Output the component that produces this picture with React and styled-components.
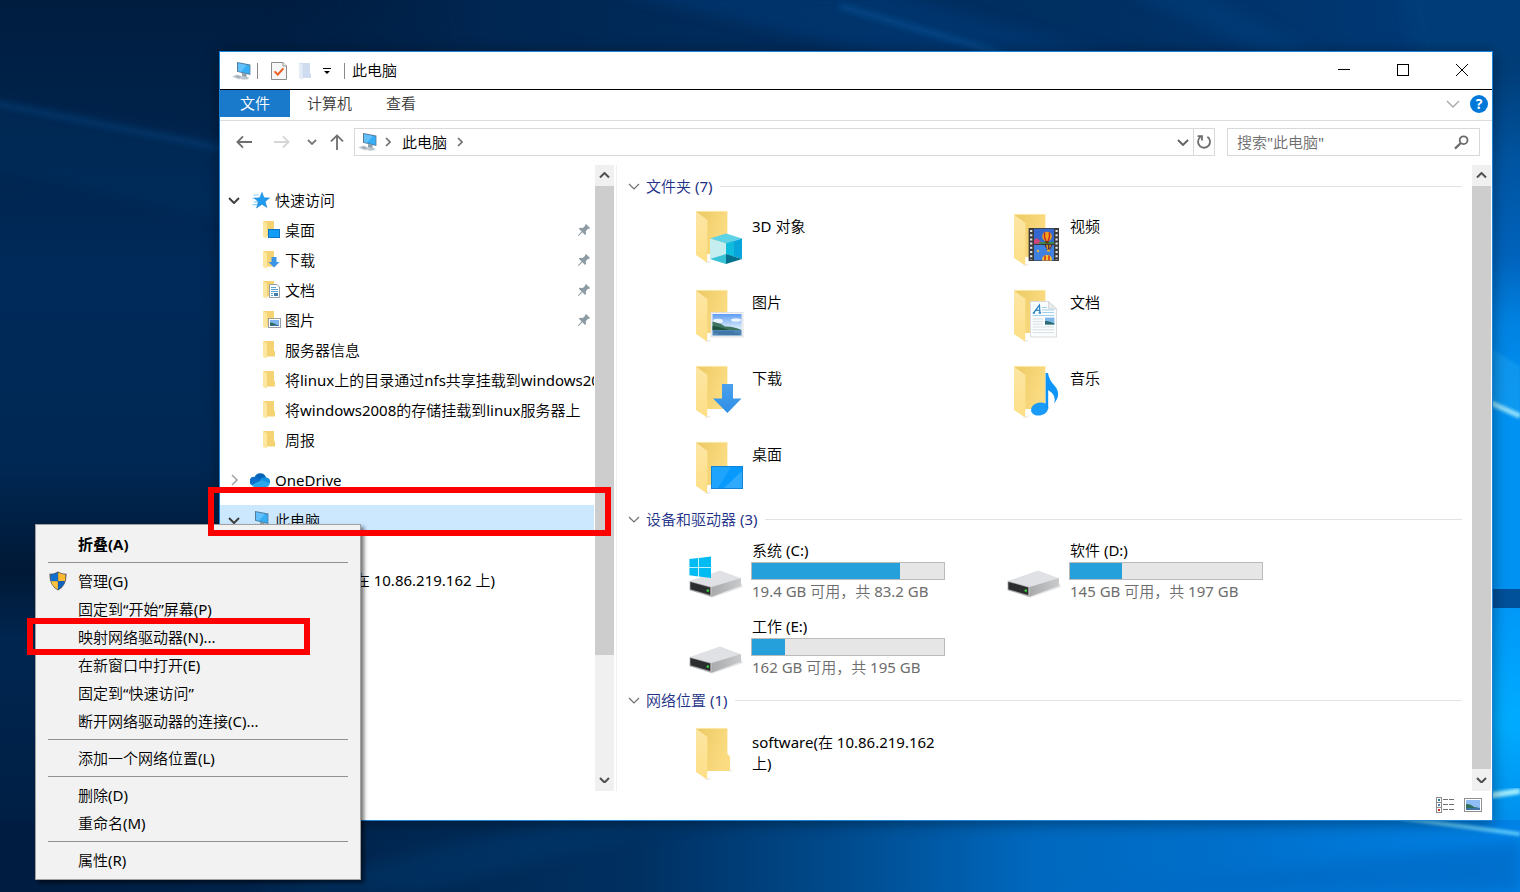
import React from "react";
import styled, { createGlobalStyle, css } from "styled-components";

const GlobalStyle = createGlobalStyle`
  *, *::before, *::after { box-sizing: border-box; }
  html, body { margin: 0; padding: 0; }
  body {
    background: #00234f;
    font-family: "Noto Sans", "Noto Sans CJK SC DemiLight", "Noto Sans CJK SC", sans-serif;
    font-size: 15px;
    line-height: 21px;
    color: #000;
  }
  button, input {
    font: inherit;
    color: inherit;
    margin: 0;
    padding: 0;
    border: 0;
    background: none;
    text-align: left;
  }
  ul, h1, h2 { margin: 0; padding: 0; list-style: none; font: inherit; }
  svg { display: block; flex: none; }
`;

/* ---------- Desktop ---------- */

const Desktop = styled.main`
  position: relative;
  display: flex;
  min-height: 100vh;
  padding: 51px 27px 71px 219px;
  overflow: hidden;
`;

const WallpaperSvg = styled.svg`
  position: absolute;
  inset: 0;
  width: 100%;
  height: 100%;
`;

function Wallpaper() {
  return (
    <WallpaperSvg viewBox="0 0 1520 892" preserveAspectRatio="none" aria-hidden="true">
      <defs>
        <linearGradient id="wpTop" x1="0" x2="1" y1="0" y2="0">
          <stop offset="0" stopColor="#001c3e" />
          <stop offset="0.15" stopColor="#002147" />
          <stop offset="0.45" stopColor="#002a59" />
          <stop offset="0.75" stopColor="#003064" />
          <stop offset="1" stopColor="#003c7c" />
        </linearGradient>
        <linearGradient id="wpLeft" x1="0" x2="0" y1="0" y2="1">
          <stop offset="0" stopColor="#001d40" />
          <stop offset="0.12" stopColor="#002249" />
          <stop offset="0.3" stopColor="#002a5a" />
          <stop offset="0.52" stopColor="#002854" />
          <stop offset="0.64" stopColor="#001936" />
          <stop offset="0.72" stopColor="#002650" />
          <stop offset="1" stopColor="#001c40" />
        </linearGradient>
        <linearGradient id="wpRight" x1="0" x2="0" y1="0" y2="1">
          <stop offset="0" stopColor="#00386f" />
          <stop offset="0.2" stopColor="#0054a0" />
          <stop offset="0.38" stopColor="#0063bc" />
          <stop offset="0.5" stopColor="#0082e2" />
          <stop offset="0.65" stopColor="#0092f2" />
        </linearGradient>
        <linearGradient id="wpGlow" x1="0" x2="0" y1="0" y2="1">
          <stop offset="0" stopColor="#0098f8" />
          <stop offset="0.4" stopColor="#00acff" />
          <stop offset="0.7" stopColor="#0094f0" />
          <stop offset="1" stopColor="#0078dc" />
        </linearGradient>
        <linearGradient id="wpBottom" x1="0" x2="1" y1="0" y2="0">
          <stop offset="0" stopColor="#001c40" />
          <stop offset="0.24" stopColor="#00264f" />
          <stop offset="0.42" stopColor="#003061" />
          <stop offset="0.55" stopColor="#004a8c" />
          <stop offset="0.68" stopColor="#0068be" />
          <stop offset="0.82" stopColor="#0070cc" />
          <stop offset="1" stopColor="#0082e6" />
        </linearGradient>
        <linearGradient id="wpFade" x1="0" x2="1" y1="0" y2="0">
          <stop offset="0" stopColor="#fff" />
          <stop offset="0.55" stopColor="#fff" />
          <stop offset="1" stopColor="#000" />
        </linearGradient>
        <mask id="wpLeftMask">
          <rect width="480" height="892" fill="url(#wpFade)" />
        </mask>
        <filter id="soft4" x="-20%" y="-50%" width="140%" height="200%">
          <feGaussianBlur stdDeviation="7" />
        </filter>
        <filter id="soft2" x="-20%" y="-50%" width="140%" height="200%">
          <feGaussianBlur stdDeviation="3" />
        </filter>
        <filter id="soft1" x="-20%" y="-50%" width="140%" height="200%">
          <feGaussianBlur stdDeviation="1.4" />
        </filter>
      </defs>
      <rect width="1520" height="892" fill="url(#wpTop)" />
      <rect width="480" height="892" fill="url(#wpLeft)" mask="url(#wpLeftMask)" />
      <path d="M-20 96 L280 154 L280 230 L-20 170Z" fill="#003468" opacity="0.3" filter="url(#soft4)" />
      <path d="M-20 100 L280 160" stroke="#0a4a88" strokeWidth="5" opacity="0.5" filter="url(#soft2)" />
      <path d="M610 -10 L880 -10 L1130 60 L900 60Z" fill="#003b78" opacity="0.55" filter="url(#soft4)" />
      <path d="M840 6 L1010 56" stroke="#0a5ba6" strokeWidth="5" opacity="0.55" filter="url(#soft2)" />
      <path d="M1120 -10 L1200 -10 L1330 60 L1280 60Z" fill="#00407e" opacity="0.5" filter="url(#soft4)" />
      <rect x="1440" y="50" width="80" height="545" fill="url(#wpRight)" />
      <path d="M1400 -20 L1540 -20 L1540 70 L1420 70Z" fill="#003c78" filter="url(#soft4)" />
      <path d="M1480 342 L1520 366 L1520 420 L1480 404Z" fill="#1ea0f0" opacity="0.5" filter="url(#soft1)" />
      <path d="M1480 398 L1520 416" stroke="#8fe0fb" strokeWidth="5" filter="url(#soft1)" />
      <rect x="1440" y="589" width="80" height="20" fill="#00509a" />
      <rect x="1440" y="608" width="80" height="284" fill="url(#wpGlow)" />
      <rect y="820" width="1520" height="72" fill="url(#wpBottom)" />
      <path d="M560 821 L700 821 L420 892 L250 892Z" fill="#003c76" opacity="0.35" filter="url(#soft4)" />
      <path d="M1050 892 L1520 842 L1520 892Z" fill="#0069c4" opacity="0.7" filter="url(#soft4)" />
      <path d="M1480 797 L1520 791" stroke="#9beafd" strokeWidth="6" filter="url(#soft1)" />
      <path d="M1400 818 L1520 834" stroke="#5cc8fb" strokeWidth="4" filter="url(#soft1)" />
    </WallpaperSvg>
  );
}

/* ---------- Window shell ---------- */

const Window = styled.section`
  position: relative;
  flex: 1;
  min-width: 0;
  display: flex;
  flex-direction: column;
  border: 1px solid #1883d7;
  background: #fff;
  box-shadow: 0 2px 14px rgba(0, 0, 0, 0.4);
`;

const TitleBar = styled.header`
  display: flex;
  align-items: center;
  height: 38px;
  border-bottom: 1px solid #000;
  padding: 0 1px 0 12px;
`;

const QuickTools = styled.div`
  display: flex;
  align-items: center;
  flex: 1;
`;

const ToolButton = styled.button`
  display: grid;
  place-items: center;
  width: ${(p) => p.$width || 26}px;
  height: 24px;
`;

const Divider = styled.span`
  width: 1px;
  height: 16px;
  margin: 0 ${(p) => p.$after || 0}px 0 ${(p) => p.$before || 0}px;
  background: #8a8a8a;
`;

const CaptionButton = styled.button`
  display: grid;
  place-items: center;
  width: 59px;
  height: 36px;
  margin-bottom: 1px;
`;

const Ribbon = styled.nav`
  display: flex;
  height: 31px;
  border-bottom: 1px solid #dadbdc;
`;

const RibbonTab = styled.button`
  height: 27px;
  padding: 0 17px;
  color: #3a3a3a;
  ${(p) =>
    p.$primary &&
    css`
      padding: 0 20px;
      background: #1979ca;
      color: #fff;
    `}
`;

const RibbonTools = styled.div`
  display: flex;
  align-items: center;
  gap: 10px;
  height: 27px;
  margin-left: auto;
  padding-right: 4px;
`;

const HelpButton = styled.button`
  width: 18px;
  height: 18px;
  border-radius: 50%;
  background: #0078d7;
  color: #fff;
  font-size: 14px;
  font-weight: 700;
  line-height: 18px;
  text-align: center;
`;

const NavBar = styled.div`
  display: flex;
  align-items: center;
  height: 44px;
  padding: 0 12px 2px 8px;
`;

const NavButton = styled.button`
  display: grid;
  place-items: center;
  width: ${(p) => p.$width}px;
  height: 28px;
`;

const AddressBar = styled.div`
  display: flex;
  align-items: center;
  flex: 1;
  min-width: 0;
  height: 28px;
  margin-right: 12px;
  border: 1px solid #d9d9d9;
  padding-left: 3px;
`;

const Crumb = styled.button`
  padding: 0 4px;
`;

const AddressTail = styled.div`
  display: flex;
  align-items: stretch;
  height: 26px;
  margin-left: auto;
`;

const TailButton = styled.button`
  display: grid;
  place-items: center;
  width: 21px;
  border-left: 1px solid ${(p) => (p.$ruled ? "#d9d9d9" : "transparent")};
`;

const SearchBox = styled.label`
  display: flex;
  align-items: center;
  width: 253px;
  height: 28px;
  border: 1px solid #d9d9d9;
  padding: 0 10px 0 9px;
`;

const SearchInput = styled.input`
  flex: 1;
  min-width: 0;
  outline: 0;
  &::placeholder { color: #6d6d6d; opacity: 1; }
`;

const Body = styled.div`
  display: flex;
  flex: 1;
  padding-right: 1px;
`;

/* ---------- Scroll bar ---------- */

const ScrollBar = styled.div`
  display: flex;
  flex-direction: column;
  flex: none;
  width: 19px;
  background: #f0f0f0;
`;

const ScrollButton = styled.button`
  display: grid;
  place-items: center;
  height: ${(p) => p.$height}px;
`;

const ScrollTrack = styled.div`
  flex: 1;
`;

const ScrollThumb = styled.div`
  height: ${(p) => p.$size};
  background: #cdcdcd;
`;

function VerticalScroll({ size }) {
  return (
    <ScrollBar>
      <ScrollButton $height={21} aria-label="向上滚动">
        <Chevron dir="up" w={9} color="#505050" stroke={2} />
      </ScrollButton>
      <ScrollTrack>
        <ScrollThumb $size={size} />
      </ScrollTrack>
      <ScrollButton $height={22} aria-label="向下滚动">
        <Chevron dir="down" w={9} color="#505050" stroke={2} />
      </ScrollButton>
    </ScrollBar>
  );
}

/* ---------- Navigation pane ---------- */

const Sidebar = styled.aside`
  display: flex;
  flex: none;
  width: 397px;
  padding-right: 2px;
  border-right: 1px solid #f0f0f0;
`;

const Tree = styled.div`
  display: flex;
  flex-direction: column;
  gap: 10px;
  flex: 1;
  min-width: 0;
  padding: 20px 1px 0 0;
`;

const TreeRow = styled.button`
  display: flex;
  align-items: center;
  width: 100%;
  height: 30px;
  padding-left: ${(p) => (p.$child ? 42 : 8)}px;
  background: ${(p) => (p.$selected ? "#cce8ff" : "transparent")};
`;

const TreeToggle = styled.span`
  display: grid;
  place-items: center;
  width: 12px;
  margin-right: 10px;
`;

const TreeLabel = styled.span`
  flex: 1;
  min-width: 0;
  overflow: hidden;
  white-space: nowrap;
  margin-left: ${(p) => (p.$child ? 3 : 5)}px;
`;

const PinSlot = styled.span`
  margin-right: 3px;
`;

const TreeChildren = styled.div`
  padding-top: 30px;
`;

/* ---------- Content pane ---------- */

const Content = styled.div`
  flex: 1;
  min-width: 0;
  padding: 7px 10px 0 11px;
`;

const GroupHeader = styled.h2`
  display: flex;
  align-items: center;
  height: 29px;
  color: #1e3287;
  &::after {
    content: "";
    flex: 1;
    height: 1px;
    margin-left: 8px;
    background: #e2e2e2;
  }
`;

const GroupToggle = styled.button`
  display: flex;
  align-items: center;
  gap: 6px;
`;

const TileGrid = styled.div`
  display: grid;
  grid-template-columns: repeat(auto-fill, 318px);
  padding-left: 60px;
  @media (min-width: 1320px) {
    grid-template-columns: repeat(2, 318px);
  }
`;

const Tile = styled.button`
  display: flex;
  align-items: ${(p) => (p.$centered ? "center" : "flex-start")};
  height: 76px;
`;

const TileIcon = styled.span`
  align-self: flex-start;
  padding-top: 6px;
`;

const TileName = styled.span`
  width: 200px;
  padding-top: ${(p) => (p.$centered ? 0 : 15)}px;
`;

const DriveInfo = styled.span`
  display: flex;
  flex-direction: column;
  width: 194px;
  padding-top: 5px;
  line-height: 22px;
`;

const DriveMeter = styled.span`
  width: 194px;
  height: 18px;
  margin-top: 1px;
  margin-left: -1px;
  border: 1px solid #bcbcbc;
  background: #e6e6e6;
`;

const DriveFill = styled.span`
  display: block;
  height: 16px;
  background: #26a0da;
`;

const DriveUsage = styled.span`
  color: #6d6d6d;
  white-space: nowrap;
`;

const StatusBar = styled.footer`
  display: flex;
  align-items: center;
  justify-content: flex-end;
  gap: 8px;
  height: 29px;
  padding: 0 10px 2px 0;
`;

/* ---------- Context menu and highlight frames ---------- */

const Menu = styled.div`
  position: absolute;
  left: 35px;
  top: 524px;
  width: 326px;
  padding: 5px 0;
  border: 1px solid #a0a0a0;
  background: #f2f2f2;
  box-shadow: 3px 3px 4px rgba(0, 0, 0, 0.55);
`;

const MenuItem = styled.button`
  display: grid;
  grid-template-columns: 29px 1fr;
  align-items: center;
  width: 100%;
  height: 28px;
  padding-left: 13px;
  ${(p) =>
    p.$bold &&
    css`
      font-family: "Noto Sans", "Noto Sans CJK SC", sans-serif;
      font-weight: 700;
    `}
`;

const MenuText = styled.span`
  grid-column: 2;
`;

const MenuRule = styled.hr`
  height: 1px;
  margin: 4px 12px;
  border: 0;
  background: #919191;
`;

const Highlight = styled.div`
  position: absolute;
  border: 6px solid #fe0000;
  pointer-events: none;
`;

const TreeHighlight = styled(Highlight)`
  left: 208px;
  top: 487px;
  width: 403px;
  height: 49px;
`;

const MenuHighlight = styled(Highlight)`
  left: 27px;
  top: 618px;
  width: 283px;
  height: 37px;
`;

/* ---------- Icons ---------- */

function Chevron({ dir, w = 10, color = "#5a5a5a", stroke = 2 }) {
  const h = w / 2;
  const vertical = dir === "down" || dir === "up";
  const d = {
    down: `M1 1 L${h + 1} ${h + 1} L${w + 1} 1`,
    up: `M1 ${h + 1} L${h + 1} 1 L${w + 1} ${h + 1}`,
    right: `M1 1 L${h + 1} ${h + 1} L1 ${w + 1}`,
  }[dir];
  const bw = vertical ? w + 2 : h + 2;
  const bh = vertical ? h + 2 : w + 2;
  return (
    <svg width={bw} height={bh} viewBox={`0 0 ${bw} ${bh}`} fill="none" stroke={color} strokeWidth={stroke}>
      <path d={d} />
    </svg>
  );
}

function PcIcon() {
  return (
    <svg width="20" height="20" viewBox="0 0 20 20">
      <path d="M10 12 L14.5 13 L14.5 16.4 L10 15.6Z" fill="#8fa0ad" />
      <ellipse cx="12.6" cy="17" rx="4.2" ry="1.5" fill="#b9c4cc" />
      <path d="M0 15.4 L5.4 13.4 L12.4 16.2 L7 18.4Z" fill="#ccd4da" />
      <path d="M2 15.4 L5.6 14.2 L10 16.1 L6.8 17.3Z" fill="#a3b0ba" />
      <path d="M5 1 L18.4 3.6 L18.4 14 L5 10.8Z" fill="#557b99" />
      <path d="M6 2.2 L17.6 4.4 L17.6 12.9 L6 10.1Z" fill="#35aef5" />
      <path d="M6 2.2 L15 3.9 L9 10.8 L6 10.1Z" fill="#62c1fa" />
    </svg>
  );
}

function SmallFolderIcon({ kind }) {
  return (
    <svg width="20" height="20" viewBox="0 0 20 20">
      <path d={kind ? "M1 1 H12 V16.6 H4Z" : "M1 1 H12 V10.6 L13 11.6 V16.6 H4Z"} fill="#f5d373" />
      <path d="M1 1 L5 3.5 V18.6 L1 17Z" fill="#fde7a0" />
      {kind === "desktop" && (
        <>
          <rect x="6" y="9" width="12" height="9" fill="#0f74bd" />
          <rect x="7" y="10" width="10" height="7" fill="#119cf8" />
        </>
      )}
      {kind === "download" && <path d="M9.5 7 H14.5 V12 H17.5 L12 17.5 L6.5 12 H9.5Z" fill="#3b94e4" />}
      {kind === "document" && (
        <>
          <path d="M7.5 4.5 H15 L17.5 7 V17.5 H7.5Z" fill="#fff" stroke="#98a0a5" />
          <path d="M9 7.5 H14 M9 9.5 H16 M9 11.5 H16 M9 13.5 H11 M9 15.5 H11" stroke="#58a3d6" />
          <rect x="12" y="13" width="4" height="3" fill="#3f7fb0" />
        </>
      )}
      {kind === "picture" && (
        <>
          <rect x="6.5" y="8.5" width="12" height="9" fill="#fff" stroke="#9aa0a4" />
          <rect x="8" y="10" width="9" height="6" fill="#7db4ee" />
          <path d="M8 12.5 L11 13 L15 15 H8Z" fill="#2e6b54" />
          <path d="M8 15 H17 V16 H8Z" fill="#3d6f9f" />
        </>
      )}
    </svg>
  );
}

function StarIcon() {
  return (
    <svg width="20" height="20" viewBox="0 0 20 20">
      <path d="M3.4 5 H9 M2.4 8.4 H6 M4 11.8 H8 M2.6 14.6 H7" stroke="#8fd0f8" strokeWidth="1.2" />
      <path d="M12 2.4 L13.9 7.8 L19.4 8 L15.2 11.6 L16.8 17.4 L12 14.2 L6.6 18 L8.4 11.8 L4.4 8.2 L9.8 7.8Z" fill="#1f9cf0" stroke="#1583d0" strokeWidth="0.6" />
    </svg>
  );
}

function CloudIcon() {
  return (
    <svg width="20" height="20" viewBox="0 0 20 20">
      <path d="M4.6 7.4 A6 6 0 0 1 15.6 6.6 L17.4 10 L9 13 L4 10Z" fill="#0364b8" />
      <path d="M1.6 15 A4.4 4.4 0 0 1 5 7 Q8 7 12 10.4 L4 16.6Z" fill="#0d6fcb" />
      <path d="M10 9.6 A5.4 5.4 0 0 1 16 7.6 A4 4 0 0 1 19.6 13.6 L14 13.4Z" fill="#1490df" />
      <path d="M1.6 15 Q3 17 5 17 H16.2 Q19.2 17 19.8 13.6 L11.6 10Z" fill="#28a8ea" />
    </svg>
  );
}

function PinIcon() {
  return (
    <svg width="14" height="14" viewBox="0 0 14 14" fill="#8d9ba5">
      <path d="M9 1 L13 5 L12 6 L11 5.8 L8.8 8.2 L9 11 L8 12 L5.4 9.2 L1.6 13 L0.8 12.4 L4.6 8.4 L1.8 5.8 L2.8 4.8 L5.8 5 L8.2 2.8 L8 2Z" />
    </svg>
  );
}

function ShieldIcon() {
  return (
    <svg width="18" height="20" viewBox="0 0 18 20">
      <path d="M9 0.4 Q4.5 3 0.6 2.6 Q-0.4 14.4 9 19.6 Q18.4 14.4 17.4 2.6 Q13.5 3 9 0.4Z" fill="#55585b" />
      <path d="M8.8 1.6 Q5 3.7 1.7 3.6 Q1.4 7 2 10 H8.8Z" fill="#1170cf" />
      <path d="M9.2 1.6 Q13 3.7 16.3 3.6 Q16.6 7 16 10 H9.2Z" fill="#fdb92f" />
      <path d="M8.8 10.2 H2 Q3.6 15.6 8.8 18.4Z" fill="#fdc23c" />
      <path d="M9.2 10.2 H16 Q14.4 15.6 9.2 18.4Z" fill="#0d62bf" />
    </svg>
  );
}

function FolderBase({ full, lift = 0 }) {
  return (
    <g transform={`translate(-1 ${-lift})`}>
      <path d="M18 57.6 L24 57 L22 59 L18 58.6Z M40 49.6 L46 49 L44 50.6 L40 50.6Z" fill="#d8d8d8" opacity="0.5" />
      <path d={full ? "M9 7.4 H40.4 V33 L43 35.6 V50 H18Z" : "M9 7.4 H40.4 V50 H18Z"} fill="url(#folderBack)" />
      <path d="M9 7.4 L20.4 16 V50 L20 58.4 L9 51Z" fill="url(#folderFlap)" />
      <path d="M9 7.4 H40.4" stroke="#fbe7a4" strokeWidth="1" />
    </g>
  );
}

const overlays = {
  cube: (
    <>
      <path d="M38 26.5 L54 31.5 L38 36.5 L22 31.5Z" fill="#5ed3e6" />
      <path d="M22 31.5 L38 36.5 V47 L22 52Z" fill="#c4eef0" />
      <path d="M54 31.5 L38 36.5 V47 L54 52Z" fill="#08a5dc" />
      <path d="M38 36.5 L46 34 V49.5 L38 47Z" fill="#0fbcdc" />
      <path d="M22 52 L38 47 V57Z" fill="#37c2d6" />
      <path d="M54 52 L38 47 V57Z" fill="#02708f" />
    </>
  ),
  picture: (
    <>
      <rect x="23" y="29.5" width="32" height="24.5" fill="#f4f4f4" stroke="#dcdcdc" strokeWidth="0.8" />
      <rect x="24.5" y="31" width="29" height="21.5" fill="url(#skyFill)" />
      <ellipse cx="30" cy="38" rx="5" ry="2.2" fill="#eaf4fd" />
      <ellipse cx="48" cy="37" rx="5" ry="1.8" fill="#eaf4fd" />
      <path d="M24.5 38.5 Q32 40 37 43.5 Q45 43 53.5 47 H24.5Z" fill="#3d7560" />
      <path d="M24.5 43 Q34 44 43 47.5 H24.5Z" fill="#1f5240" />
      <rect x="24.5" y="47" width="29" height="5.5" fill="#4f86b5" />
      <path d="M26 49 H46 M30 51 H51" stroke="#2e6392" strokeWidth="0.8" />
    </>
  ),
  download: <path d="M34 25 H45 V39.5 H53.5 L39.4 54 L25 39.5 H34Z" fill="url(#arrowFill)" />,
  desktop: (
    <>
      <rect x="23" y="31" width="32" height="23" fill="#0d84d8" />
      <rect x="24" y="32" width="30" height="21" fill="#0899fd" />
      <path d="M24 32 H43 L30 53 H24Z" fill="#1ea4fc" />
      <path d="M54 36 V53 H36Z" fill="#2fa9fb" />
    </>
  ),
  video: (
    <>
      <rect x="22.6" y="21" width="30.4" height="33" fill="#3b3b3b" />
      <rect x="28" y="21.8" width="20" height="15" fill="#3468cf" />
      <rect x="28" y="38" width="20" height="15.4" fill="#4080de" />
      <path d="M28 33 Q31 29 34 34 L37 36.8 H28Z" fill="#d0457a" />
      <path d="M33 35 H48 V36.8 H33Z" fill="#3b8b3a" />
      <circle cx="41" cy="29.5" r="4.8" fill="#f0a21c" />
      <path d="M39 25.5 Q37.4 29 40 34 M43 25.5 Q44.6 29 42 34" stroke="#c92222" strokeWidth="1.4" fill="none" />
      <path d="M39.4 34 H42.6 V36.4 H39.4Z" fill="#69390e" />
      <path d="M38.4 38 H46.6 L43.8 43 H41.2Z" fill="#5b3046" />
      <path d="M40.4 38 H41.8 V42 H41Z M43.4 38 H44.8 L43.8 42Z" fill="#f3b81e" />
      <path d="M41.2 42.6 H43.8 V44.6 H41.2Z" fill="#f3b81e" />
      <circle cx="32" cy="44" r="1.2" fill="#e8b04a" />
      <path d="M36 53.4 Q36.2 48 41 48 Q45.8 48 46 53.4Z" fill="#f7c12b" />
      <path d="M39 48.6 V53.4 M43 48.6 V53.4" stroke="#c92222" strokeWidth="1.4" />
      <path d="M25.2 23 V53" stroke="#e8e8e8" strokeWidth="2.2" strokeDasharray="2 2.2" />
      <path d="M50.6 23 V53" stroke="#e8e8e8" strokeWidth="2.2" strokeDasharray="2 2.2" />
    </>
  ),
  document: (
    <>
      <path d="M24.5 18.5 H42.5 L50.5 26 V54 H24.5Z" fill="#fafcfd" stroke="#d5d9dc" strokeWidth="0.9" />
      <path d="M42.5 18.5 V26 H50.5Z" fill="#e8ebed" stroke="#cfd3d6" strokeWidth="0.8" />
      <path d="M27.6 30 L33.4 22 L34 30 M29.6 27.4 H34 M26.8 30 H29 M32.6 30 H35" stroke="#2c86c6" strokeWidth="1.3" fill="none" />
      <path d="M36 24.5 H41 M36 27 H48 M36 29.5 H48 M26.6 32.5 H48" stroke="#a3cfeb" strokeWidth="1" />
      <path d="M26.6 36 H37 M26.6 38.6 H37 M26.6 41.2 H37 M26.6 44 H48 M26.6 46.8 H48 M26.6 49.6 H48" stroke="#d3dbe1" strokeWidth="0.9" />
      <rect x="39" y="34.6" width="9.4" height="7" fill="#7db7e8" />
      <path d="M39 38 Q43 37.6 48.4 40.6 V41.6 H39Z" fill="#2b6a6c" />
    </>
  ),
  music: (
    <>
      <ellipse cx="33.6" cy="50" rx="8.8" ry="6.4" transform="rotate(-14 33.6 50)" fill="#1a9bf7" />
      <path d="M39.6 14 H42 Q43 21 48.4 26.4 Q56 35 48 44.4 Q51 36.4 42.2 31 V49 H39.6Z" fill="#0f95f5" />
    </>
  ),
};

function FolderIcon({ kind }) {
  return (
    <svg width="64" height="64" viewBox="0 0 64 64">
      <FolderBase full={!kind} lift={kind === "cube" ? 3 : 0} />
      {overlays[kind]}
    </svg>
  );
}

function DriveIcon({ system }) {
  return (
    <svg width="64" height="64" viewBox="0 0 64 64">
      <path d="M16 55 L24 57.8 L55 47 L53 43Z" fill="#000" opacity="0.1" />
      <path d="M1.6 41 L32 30.6 L53 38.2 L23.6 47.4Z" fill="#e0e1e4" />
      <path d="M23.6 47 L53 38 V45.8 L23.6 56.8Z" fill="url(#driveSide)" />
      <path d="M1.6 41 L23.6 47 V56.8 L1.6 50.2Z" fill="#a7a8aa" />
      <path d="M2.4 42 L22.2 47.4 V55 L2.4 49.2Z" fill="#2c2d2f" />
      <circle cx="19.8" cy="50.6" r="1.3" fill="#35d33c" />
      {system && (
        <path d="M1.4 19 L10.2 18 V27.2 H1.4Z M11 17.9 L23 16.6 V27.2 H11Z M1.4 28 H10.2 V36.4 L1.4 35.2Z M11 28 H23 V38 L11 36.6Z" fill="#00bcf2" />
      )}
    </svg>
  );
}

const DefsSvg = styled.svg`
  position: absolute;
`;

function IconDefs() {
  return (
    <DefsSvg width="1" height="1" aria-hidden="true">
      <defs>
        <linearGradient id="folderBack" x1="0" y1="0" x2="1" y2="0.4">
          <stop offset="0" stopColor="#ecc963" />
          <stop offset="1" stopColor="#fbdc82" />
        </linearGradient>
        <linearGradient id="folderFlap" x1="0" y1="0" x2="0" y2="1">
          <stop offset="0" stopColor="#fce6a4" />
          <stop offset="1" stopColor="#fedf86" />
        </linearGradient>
        <linearGradient id="arrowFill" x1="0" y1="0" x2="0" y2="1">
          <stop offset="0" stopColor="#4ba0ec" />
          <stop offset="1" stopColor="#2e8fe6" />
        </linearGradient>
        <linearGradient id="skyFill" x1="0" y1="0" x2="0" y2="1">
          <stop offset="0" stopColor="#5f9cf2" />
          <stop offset="0.6" stopColor="#cfe5fa" />
        </linearGradient>
        <linearGradient id="driveSide" x1="0" y1="0" x2="1" y2="0">
          <stop offset="0" stopColor="#a9aaac" />
          <stop offset="1" stopColor="#c9cacc" />
        </linearGradient>
      </defs>
    </DefsSvg>
  );
}

/* ---------- Data ---------- */

const quickAccess = [
  { name: "桌面", kind: "desktop", pinned: true },
  { name: "下载", kind: "download", pinned: true },
  { name: "文档", kind: "document", pinned: true },
  { name: "图片", kind: "picture", pinned: true },
  { name: "服务器信息" },
  { name: "将linux上的目录通过nfs共享挂载到windows2008" },
  { name: "将windows2008的存储挂载到linux服务器上" },
  { name: "周报" },
];

const folders = [
  { name: "3D 对象", kind: "cube" },
  { name: "视频", kind: "video" },
  { name: "图片", kind: "picture" },
  { name: "文档", kind: "document" },
  { name: "下载", kind: "download" },
  { name: "音乐", kind: "music" },
  { name: "桌面", kind: "desktop" },
];

const drives = [
  { name: "系统 (C:)", usage: "19.4 GB 可用，共 83.2 GB", used: 77, system: true },
  { name: "软件 (D:)", usage: "145 GB 可用，共 197 GB", used: 27 },
  { name: "工作 (E:)", usage: "162 GB 可用，共 195 GB", used: 17 },
];

const menuGroups = [
  [{ label: "折叠(A)", bold: true }],
  [
    { label: "管理(G)", shield: true },
    { label: "固定到“开始”屏幕(P)" },
    { label: "映射网络驱动器(N)..." },
    { label: "在新窗口中打开(E)" },
    { label: "固定到“快速访问”" },
    { label: "断开网络驱动器的连接(C)..." },
  ],
  [{ label: "添加一个网络位置(L)" }],
  [{ label: "删除(D)" }, { label: "重命名(M)" }],
  [{ label: "属性(R)" }],
];

/* ---------- Composite parts ---------- */

function RootRow({ name, icon, open, selected }) {
  return (
    <TreeRow $selected={selected}>
      <TreeToggle>
        <Chevron dir={open ? "down" : "right"} w={10} color={open ? "#404040" : "#a6a6a6"} stroke={open ? 2 : 1.6} />
      </TreeToggle>
      {icon}
      <TreeLabel>{name}</TreeLabel>
    </TreeRow>
  );
}

function ChildRow({ name, kind, pinned }) {
  return (
    <TreeRow $child>
      <SmallFolderIcon kind={kind} />
      <TreeLabel $child>{name}</TreeLabel>
      {pinned && (
        <PinSlot>
          <PinIcon />
        </PinSlot>
      )}
    </TreeRow>
  );
}

function Group({ title, children }) {
  return (
    <section>
      <GroupHeader>
        <GroupToggle>
          <Chevron dir="down" w={10} color="#6f6f6f" stroke={1.2} />
          {title}
        </GroupToggle>
      </GroupHeader>
      <TileGrid>{children}</TileGrid>
    </section>
  );
}

function ContextMenu() {
  return (
    <Menu role="menu">
      {menuGroups.map((group, g) => (
        <React.Fragment key={g}>
          {g > 0 && <MenuRule />}
          {group.map((item) => (
            <MenuItem key={item.label} role="menuitem" $bold={item.bold}>
              {item.shield && <ShieldIcon />}
              <MenuText>{item.label}</MenuText>
            </MenuItem>
          ))}
        </React.Fragment>
      ))}
    </Menu>
  );
}

export default function App() {
  return (
    <>
      <GlobalStyle />
      <Desktop>
        <Wallpaper />
        <IconDefs />
        <Window>
          <TitleBar>
            <QuickTools>
              <PcIcon />
              <Divider $before={5} $after={8} />
              <ToolButton aria-label="属性">
                <svg width="16" height="18" viewBox="0 0 16 18">
                  <path d="M0.5 0.5 H12 L15.5 4 V17.5 H0.5Z" fill="#f7f7f7" stroke="#8c8c8c" />
                  <path d="M12 0.5 V4 H15.5" fill="#fff" stroke="#8c8c8c" />
                  <path d="M3.6 9.4 L6.8 12.6 L12.4 6.4" fill="none" stroke="#ee5a1c" strokeWidth="2" />
                </svg>
              </ToolButton>
              <ToolButton aria-label="新建文件夹">
                <svg width="14" height="18" viewBox="0 0 14 18">
                  <path d="M1 1 H12 V11 L13 12 V16 H4Z" fill="#cfdcf0" />
                  <path d="M1 1 L4.6 3 V18 L1 16Z" fill="#e4ecf8" />
                </svg>
              </ToolButton>
              <ToolButton $width={18} aria-label="自定义快速访问工具栏">
                <svg width="8" height="6" viewBox="0 0 8 6">
                  <path d="M0 0.5 H8" stroke="#000" />
                  <path d="M1 3 H7 L4 6Z" fill="#000" />
                </svg>
              </ToolButton>
              <Divider $before={8} $after={7} />
              <h1>此电脑</h1>
            </QuickTools>
            <CaptionButton aria-label="最小化">
              <svg width="12" height="12" viewBox="0 0 12 12" stroke="#000">
                <path d="M0 5.5 H12" />
              </svg>
            </CaptionButton>
            <CaptionButton aria-label="最大化">
              <svg width="12" height="12" viewBox="0 0 12 12" stroke="#000" fill="none">
                <rect x="0.5" y="0.5" width="11" height="11" />
              </svg>
            </CaptionButton>
            <CaptionButton aria-label="关闭">
              <svg width="12" height="12" viewBox="0 0 12 12" stroke="#000">
                <path d="M0 0 L12 12 M12 0 L0 12" />
              </svg>
            </CaptionButton>
          </TitleBar>

          <Ribbon>
            <RibbonTab $primary>文件</RibbonTab>
            <RibbonTab>计算机</RibbonTab>
            <RibbonTab>查看</RibbonTab>
            <RibbonTools>
              <Chevron dir="down" w={12} color="#a8a8a8" stroke={1.4} />
              <HelpButton aria-label="帮助">?</HelpButton>
            </RibbonTools>
          </Ribbon>

          <NavBar>
            <NavButton $width={32} aria-label="后退">
              <svg width="16" height="14" viewBox="0 0 16 14" fill="none" stroke="#6e6e6e" strokeWidth="1.8">
                <path d="M16 7 H1.6 M7 1.4 L1.4 7 L7 12.6" />
              </svg>
            </NavButton>
            <NavButton $width={44} aria-label="前进">
              <svg width="16" height="14" viewBox="0 0 16 14" fill="none" stroke="#d6d6d6" strokeWidth="1.8">
                <path d="M0 7 H14.4 M9 1.4 L14.6 7 L9 12.6" />
              </svg>
            </NavButton>
            <NavButton $width={16} aria-label="最近浏览的位置">
              <Chevron dir="down" w={8} color="#7a7a7a" stroke={1.8} />
            </NavButton>
            <NavButton $width={34} aria-label="上移到桌面">
              <svg width="14" height="16" viewBox="0 0 14 16" fill="none" stroke="#6e6e6e" strokeWidth="1.8">
                <path d="M7 16 V1.6 M1 7.4 L7 1.4 L13 7.4" />
              </svg>
            </NavButton>
            <AddressBar>
              <PcIcon />
              <NavButton $width={20} aria-label="展开">
                <Chevron dir="right" w={8} color="#6e6e6e" stroke={1.6} />
              </NavButton>
              <Crumb>此电脑</Crumb>
              <NavButton $width={18} aria-label="展开此电脑">
                <Chevron dir="right" w={8} color="#6e6e6e" stroke={1.6} />
              </NavButton>
              <AddressTail>
                <TailButton aria-label="以前的位置">
                  <Chevron dir="down" w={10} color="#5f5f5f" stroke={1.8} />
                </TailButton>
                <TailButton $ruled aria-label="刷新">
                  <svg width="16" height="16" viewBox="0 0 16 16" fill="none" stroke="#6e6e6e" strokeWidth="1.8">
                    <path d="M11.4 2.8 A6 6 0 1 1 4.4 3" />
                    <path d="M1.6 2.2 H6 V6.4" />
                  </svg>
                </TailButton>
              </AddressTail>
            </AddressBar>
            <SearchBox>
              <SearchInput type="text" aria-label="搜索" placeholder={'搜索"此电脑"'} />
              <svg width="15" height="15" viewBox="0 0 15 15" fill="none" stroke="#6a6a6a">
                <circle cx="9.6" cy="5.2" r="3.9" strokeWidth="1.8" />
                <path d="M6.8 8 L1 13.6" strokeWidth="2.2" />
              </svg>
            </SearchBox>
          </NavBar>

          <Body>
            <Sidebar>
              <Tree>
                <div>
                  <RootRow name="快速访问" icon={<StarIcon />} open />
                  {quickAccess.map((item) => (
                    <ChildRow key={item.name} {...item} />
                  ))}
                </div>
                <RootRow name="OneDrive" icon={<CloudIcon />} />
                <div>
                  <RootRow name="此电脑" icon={<PcIcon />} open selected />
                  <TreeChildren>
                    <ChildRow name="software (在 10.86.219.162 上)" />
                  </TreeChildren>
                </div>
              </Tree>
              <VerticalScroll size="80.5%" />
            </Sidebar>

            <Content>
              <Group title="文件夹 (7)">
                {folders.map((f) => (
                  <Tile key={f.name}>
                    <TileIcon>
                      <FolderIcon kind={f.kind} />
                    </TileIcon>
                    <TileName>{f.name}</TileName>
                  </Tile>
                ))}
              </Group>
              <Group title="设备和驱动器 (3)">
                {drives.map((d) => (
                  <Tile key={d.name}>
                    <TileIcon>
                      <DriveIcon system={d.system} />
                    </TileIcon>
                    <DriveInfo>
                      <span>{d.name}</span>
                      <DriveMeter>
                        <DriveFill style={{ width: `${d.used}%` }} />
                      </DriveMeter>
                      <DriveUsage>{d.usage}</DriveUsage>
                    </DriveInfo>
                  </Tile>
                ))}
              </Group>
              <Group title="网络位置 (1)">
                <Tile $centered>
                  <TileIcon>
                    <FolderIcon />
                  </TileIcon>
                  <TileName $centered>software(在 10.86.219.162 上)</TileName>
                </Tile>
              </Group>
            </Content>
            <VerticalScroll size="100%" />
          </Body>

          <StatusBar>
            <button aria-label="详细信息">
              <svg width="20" height="16" viewBox="0 0 20 16" fill="none" stroke="#8c8c8c">
                <rect x="0.5" y="0.5" width="5" height="5" />
                <rect x="0.5" y="5.5" width="5" height="5" />
                <rect x="0.5" y="10.5" width="5" height="5" />
                <path d="M7 2.5 H12 M13 2.5 H18 M7 7.5 H12 M13 7.5 H18 M7 12.5 H12 M13 12.5 H18" stroke="#6f6f6f" />
                <path d="M2 3 H4" stroke="#2a7f8e" strokeWidth="2" />
                <path d="M2 8 H4" stroke="#4d7fc0" strokeWidth="2" />
                <path d="M2 13 H4" stroke="#d5291f" strokeWidth="2" />
              </svg>
            </button>
            <button aria-label="大缩略图">
              <svg width="18" height="14" viewBox="0 0 18 14">
                <rect x="0.5" y="0.5" width="17" height="13" fill="#fff" stroke="#8f8f8f" />
                <rect x="2" y="2" width="14" height="10" fill="#8dbdf3" />
                <path d="M2 6 Q7 6 10 9 L16 10 V12 H2Z" fill="#2f6f5b" />
                <path d="M2 10 H16 V12 H2Z" fill="#3f74a6" />
              </svg>
            </button>
          </StatusBar>
        </Window>

        <ContextMenu />
        <TreeHighlight />
        <MenuHighlight />
      </Desktop>
    </>
  );
}
